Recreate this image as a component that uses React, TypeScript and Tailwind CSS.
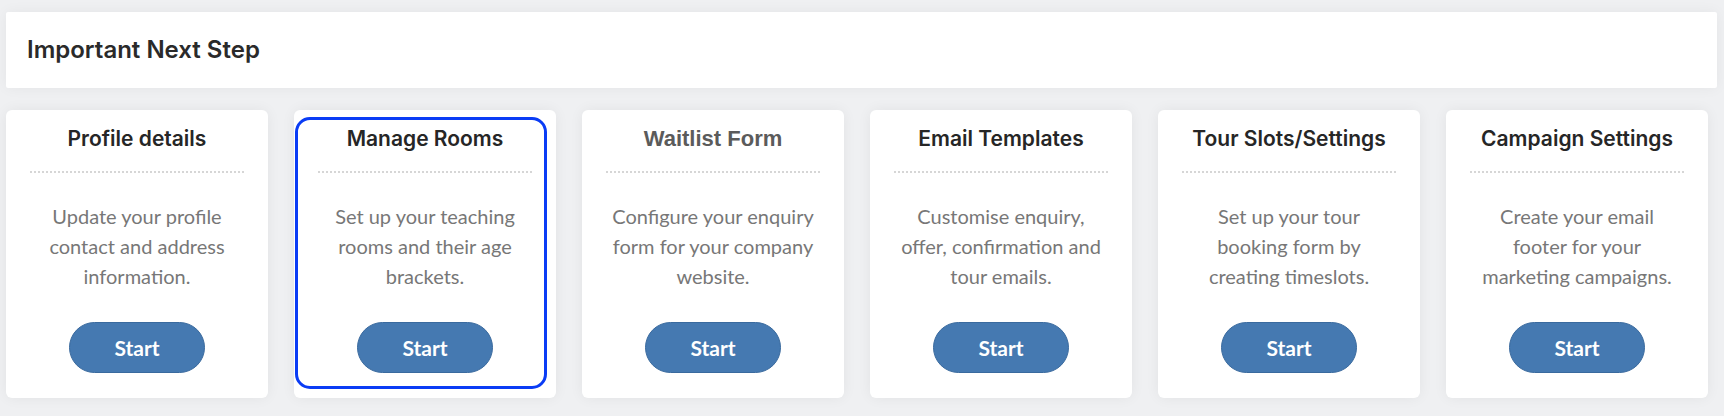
import React from 'react'

const steps = [
  {
    id: 1,
    title: 'Profile details',
    description: 'Update your profile contact and address information.',
  },
  {
    id: 2,
    title: 'Manage Rooms',
    description: 'Set up your teaching rooms and their age brackets.',
    focused: true,
  },
  {
    id: 3,
    title: 'Waitlist Form',
    description: 'Configure your enquiry form for your company website.',
    legacy: true,
  },
  {
    id: 4,
    title: 'Email Templates',
    description: 'Customise enquiry, offer, confirmation and tour emails.',
  },
  {
    id: 5,
    title: 'Tour Slots/Settings',
    description: 'Set up your tour booking form by creating timeslots.',
  },
  {
    id: 6,
    title: 'Campaign Settings',
    description: 'Create your email footer for your marketing campaigns.',
  },
]

const StepCard = ({ step }: { step: (typeof steps)[0] }) => {
  return (
    <div className="relative flex h-[288px] flex-col items-center rounded-[6px] bg-white px-6 pt-[15px] pb-[25px] shadow-[0_0_14px_rgba(0,0,0,0.06)]">
      {/* Focus ring on the selected card */}
      {step.focused && (
        <div className="pointer-events-none absolute top-[7px] right-[9px] bottom-[9px] left-[1px] rounded-[15px] border-[3px] border-[#0a3cf5]" />
      )}

      {step.legacy ? (
        <h3 className="font-['Liberation_Sans',Arial,sans-serif] text-[22px] leading-[28px] font-bold text-[#5b5b5b]">
          {step.title}
        </h3>
      ) : (
        <h3 className="font-['Inter',sans-serif] text-[21px] leading-[28px] font-semibold text-[#262626]">
          {step.title}
        </h3>
      )}

      <div className="mt-[18px] w-full border-t-2 border-dotted border-[#d6d6d6]" />

      <p className="mt-[28px] px-1 text-center font-['Lato',sans-serif] text-[20px] leading-[30px] text-[#777777]">
        {step.description}
      </p>

      <button className="mt-auto h-[51px] w-[136px] rounded-full border border-[#3a6a9e] bg-[#4579b1] font-['Lato',sans-serif] text-[21px] font-bold text-white">
        Start
      </button>
    </div>
  )
}

export default function App() {
  return (
    <div className="min-h-[416px] w-full bg-[#eff0f2] pt-3 pl-[6px] pr-[7px]">
      {/* Header */}
      <div className="flex h-[76px] items-center rounded-[2px] bg-white px-[21px] shadow-[0_0_14px_rgba(0,0,0,0.05)]">
        <h2 className="font-['Inter',sans-serif] text-[24px] font-semibold text-[#2a2a2a]">
          Important Next Step
        </h2>
      </div>

      {/* Steps */}
      <div className="mt-[22px] grid w-[1702px] grid-cols-6 gap-[26px]">
        {steps.map((step) => (
          <StepCard key={step.id} step={step} />
        ))}
      </div>
    </div>
  )
}
